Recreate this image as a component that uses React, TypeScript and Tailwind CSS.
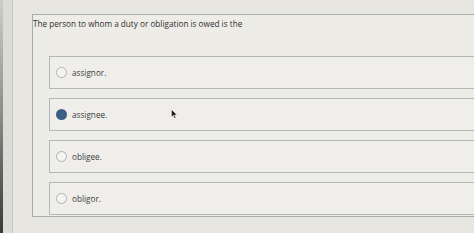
import React from "react";

const options = [
  { label: "assignor.", selected: false },
  { label: "assignee.", selected: true },
  { label: "obligee.", selected: false },
  { label: "obligor.", selected: false },
];

export default function App() {
  return (
    <div
      className="relative flex w-[474px] h-[233px] overflow-hidden bg-[#e7e6e1]"
      style={{ fontFamily: '"Open Sans", "Noto Sans", sans-serif' }}
    >
      <div className="w-[3px] shrink-0 bg-gradient-to-b from-[#cfcfca] via-[#8a8a88] to-[#3a3a3c]" />
      <div className="w-[10px] shrink-0 bg-[#dcdbd5] border-r border-[#c9c9c3]" />
      <div className="flex-1 pl-[19px] pt-[14px]">
        <div className="w-[460px] h-[203px] border border-[#a7acae] bg-[#edece7] pt-[3px]">
          <p className="text-[8.2px] leading-[11px] text-[#2f2f2f]">
            The person to whom a duty or obligation is owed is the
          </p>
          <div className="mt-[27px] ml-[16px] flex flex-col gap-[9px]">
            {options.map((o) => (
              <div
                key={o.label}
                className="flex h-[33px] items-center border border-[#b4b8b8] bg-[#efeeea] pl-[6px]"
              >
                {o.selected ? (
                  <span className="h-[11px] w-[11px] rounded-full bg-[#3c5d84]" />
                ) : (
                  <span className="h-[11px] w-[11px] rounded-full border border-[#b0b0ac] bg-[#f4f4f0]" />
                )}
                <span className="ml-[5px] text-[8.2px] leading-[11px] text-[#3d3d3d]">{o.label}</span>
              </div>
            ))}
          </div>
        </div>
      </div>
      <svg
        className="absolute left-[171px] top-[109px]"
        width="7"
        height="10"
        viewBox="0 0 7 10"
      >
        <path d="M0.5 0.5 L0.5 8 L2.3 6.3 L3.6 9.3 L4.8 8.8 L3.5 5.9 L6 5.9 Z" fill="#1a1a1a" stroke="#ffffff" strokeWidth="0.4" />
      </svg>
    </div>
  );
}
